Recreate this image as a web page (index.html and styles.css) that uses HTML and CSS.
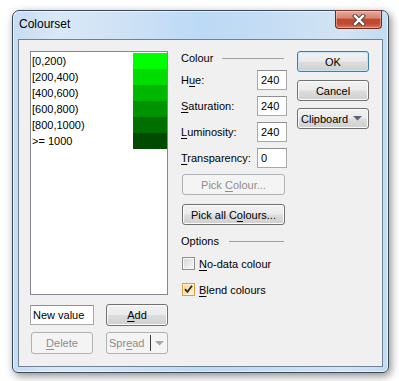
FILE: index.html
```html
<!DOCTYPE html>
<html>
<head>
<meta charset="utf-8">
<link rel="stylesheet" href="styles.css">
</head>
<body>
<div class="window">
  <div class="titlebar">
    <span class="title">Colourset</span>
    <div class="close">
      <svg width="14" height="12" viewBox="0 0 14 12">
        <path d="M3 2 L11 10 M11 2 L3 10" stroke="#4a4a4a" stroke-width="4.4" stroke-linecap="square" fill="none"/>
        <path d="M3 2 L11 10 M11 2 L3 10" stroke="#ffffff" stroke-width="2.4" stroke-linecap="square" fill="none"/>
      </svg>
    </div>
  </div>
  <div class="client">
    <div class="col-left">
      <div class="listbox">
        <div class="item"><span>[0,200)</span><span class="swatch" style="background:#00ff00"></span></div>
        <div class="item"><span>[200,400)</span><span class="swatch" style="background:#00db00"></span></div>
        <div class="item"><span>[400,600)</span><span class="swatch" style="background:#00b700"></span></div>
        <div class="item"><span>[600,800)</span><span class="swatch" style="background:#009300"></span></div>
        <div class="item"><span>[800,1000)</span><span class="swatch" style="background:#006f00"></span></div>
        <div class="item"><span>&gt;= 1000</span><span class="swatch" style="background:#004b00"></span></div>
      </div>
      <div class="row-add">
        <div class="textbox newval">New value</div>
        <div class="btn add"><span><u>A</u>dd</span></div>
      </div>
      <div class="row-del">
        <div class="btn disabled del"><span><u>D</u>elete</span></div>
        <div class="btn disabled spread">
          <span class="spread-text">Spr<u>e</u>ad</span>
          <span class="divider"></span>
          <svg class="arrow" width="9" height="5" viewBox="0 0 9 5"><path d="M0 0 H9 L4.5 4.5 Z" fill="#a7a7a7"/></svg>
        </div>
      </div>
    </div>
    <div class="col-mid">
      <div class="header"><span>Colour</span><span class="line"></span></div>
      <div class="fields">
        <div class="field"><span>H<u>u</u>e:</span><div class="textbox num">240</div></div>
        <div class="field"><span><u>S</u>aturation:</span><div class="textbox num">240</div></div>
        <div class="field"><span><u>L</u>uminosity:</span><div class="textbox num">240</div></div>
        <div class="field"><span><u>T</u>ransparency:</span><div class="textbox num">0</div></div>
      </div>
      <div class="btn disabled pick"><span>Pick <u>C</u>olour...</span></div>
      <div class="btn pickall"><span>Pick all C<u>o</u>lours...</span></div>
      <div class="header options"><span>Options</span><span class="line"></span></div>
      <div class="check nodata">
        <span class="box"></span>
        <span class="clabel"><u>N</u>o-data colour</span>
      </div>
      <div class="check blend">
        <span class="box hot">
          <svg width="9" height="9" viewBox="0 0 9 9"><path d="M1 4.2 L3.4 6.8 L8 0.8" stroke="#2a2a2a" stroke-width="1.8" fill="none"/></svg>
        </span>
        <span class="clabel"><u>B</u>lend colours</span>
      </div>
    </div>
    <div class="col-right">
      <div class="btn default ok"><span>OK</span></div>
      <div class="btn cancel"><span>Cancel</span></div>
      <div class="btn clip">
        <span>Clipboard</span>
        <svg class="arrow" width="9" height="5" viewBox="0 0 9 5"><path d="M0 0 H9 L4.5 4.5 Z" fill="#56657a"/></svg>
      </div>
    </div>
  </div>
</div>
</body>
</html>
```

FILE: styles.css
```css
html, body {
  margin: 0;
  padding: 0;
  background: #ffffff;
}
body {
  width: 399px;
  height: 381px;
  overflow: hidden;
  font-family: "Liberation Sans", Arial, sans-serif;
  font-size: 11px;
  color: #000;
}
.window {
  box-sizing: border-box;
  width: 377px;
  height: 363px;
  margin: 10px 0 0 12px;
  border: 1px solid #3a4a5c;
  border-radius: 7px 7px 6px 6px;
  background: linear-gradient(90deg, #c6dcf1 0%, #d8e8f7 12%, #cfe2f5 30%, #bcd9f5 50%, #c6ddf4 70%, #d2e4f5 88%, #c4dbf1 100%);
  box-shadow: inset 0 0 0 1px rgba(255,255,255,0.55), 2px 3px 9px rgba(0,0,0,0.45);
  padding: 0 5px 5px 5px;
  display: flex;
  flex-direction: column;
}
.titlebar {
  height: 28px;
  display: flex;
  justify-content: space-between;
  align-items: flex-start;
  padding-right: 1px;
}
.title {
  font-size: 12px;
  line-height: 14px;
  padding: 6px 0 0 1px;
  color: #000;
}
.close {
  box-sizing: border-box;
  width: 47px;
  height: 19px;
  margin-top: -1px;
  border: 1px solid #6b2a20;
  border-top-color: #7a3a30;
  border-radius: 0 0 4px 4px;
  background: linear-gradient(#e9a99c 0%, #d98572 40%, #c2482f 50%, #c14a30 75%, #d6785c 100%);
  box-shadow: inset 0 0 0 1px rgba(255,220,210,0.45);
  display: flex;
  align-items: center;
  justify-content: center;
}
.client {
  box-sizing: border-box;
  height: 328px;
  border: 1px solid #6f8194;
  background: #f0f0f0;
  display: flex;
  padding: 11px 0 0 11px;
}
.col-left {
  width: 138px;
  display: flex;
  flex-direction: column;
}
.listbox {
  box-sizing: border-box;
  height: 244px;
  border: 1px solid #828790;
  background: #fff;
  padding: 1px 0 0 1px;
}
.item {
  height: 16px;
  display: flex;
  justify-content: space-between;
  align-items: center;
  line-height: 16px;
}
.swatch {
  width: 34px;
  height: 16px;
}
.item:first-child .swatch {
  margin-top: 0;
}
.row-add {
  display: flex;
  align-items: center;
  margin-top: 9px;
  height: 22px;
}
.textbox {
  box-sizing: border-box;
  background: #fff;
  border: 1px solid #a8a8a8;
  border-top-color: #8e8f8f;
  display: flex;
  align-items: center;
  padding-left: 2px;
}
.newval {
  width: 64px;
  height: 20px;
}
.btn {
  box-sizing: border-box;
  height: 21px;
  border: 1px solid #707070;
  border-radius: 3px;
  background: linear-gradient(#f2f2f2 0%, #ebebeb 48%, #dddddd 52%, #cfcfcf 100%);
  box-shadow: inset 0 0 0 1px #fbfbfb;
  display: flex;
  align-items: center;
  justify-content: center;
  white-space: nowrap;
}
.btn.disabled {
  border-color: #adb2b5;
  background: #f4f4f4;
  box-shadow: none;
  color: #8d8d8d;
}
.btn.default {
  border-color: #3c7fb1;
  box-shadow: inset 0 0 0 1px #c4e5f6;
}
u {
  text-decoration-thickness: 1px;
  text-underline-offset: 1.5px;
}
.add {
  width: 62px;
  height: 22px;
  margin-left: 12px;
}
.row-del {
  display: flex;
  margin-top: 6px;
}
.row-del .btn {
  height: 22px;
}
.del {
  width: 62px;
  margin-left: 1px;
}
.spread {
  width: 62px;
  margin-left: 13px;
  justify-content: flex-start;
  padding-left: 2px;
}
.divider {
  width: 1px;
  height: 16px;
  background: #3a3a3a;
  margin-left: 5px;
}
.spread .arrow {
  margin-left: 4px;
}
.col-mid {
  width: 106px;
  margin-left: 13px;
  display: flex;
  flex-direction: column;
}
.header {
  height: 14px;
  display: flex;
  align-items: center;
}
.header .line {
  flex: 1;
  height: 1px;
  background: #a0a0a0;
  margin: 1px 3px 0 9px;
}
.options .line {
  margin-left: 10px;
}
.fields {
  margin-top: 5px;
  display: flex;
  flex-direction: column;
  gap: 6px;
}
.field {
  height: 20px;
  display: flex;
  justify-content: space-between;
  align-items: center;
}
.num {
  width: 30px;
  height: 20px;
  padding-left: 3px;
}
.pick {
  width: 103px;
  margin: 6px 0 0 1px;
}
.pickall {
  width: 103px;
  margin: 9px 0 0 1px;
}
.options {
  margin-top: 9px;
}
.check {
  display: flex;
  align-items: center;
  height: 13px;
  margin-left: 1px;
}
.nodata {
  margin-top: 9px;
}
.blend {
  margin-top: 13px;
}
.box {
  box-sizing: border-box;
  width: 13px;
  height: 13px;
  border: 1px solid #8e8f8f;
  background: linear-gradient(135deg, #d4d4d4 0%, #f4f4f4 80%, #ffffff 100%);
  box-shadow: inset 0 0 0 1px #f6f6f6;
  display: flex;
  align-items: center;
  justify-content: center;
}
.box.hot {
  border-color: #e29a3a;
  background: linear-gradient(135deg, #f8d58f 0%, #fdebc4 70%, #fff6e2 100%);
  box-shadow: inset 0 0 0 1px #fff3d6;
}
.clabel {
  margin-left: 4px;
}
.col-right {
  width: 72px;
  margin-left: 10px;
  display: flex;
  flex-direction: column;
}
.ok {
  margin-top: 0;
}
.cancel {
  margin-top: 8px;
}
.clip {
  margin-top: 7px;
  justify-content: space-between;
  padding: 0 6px 0 3px;
}
```
